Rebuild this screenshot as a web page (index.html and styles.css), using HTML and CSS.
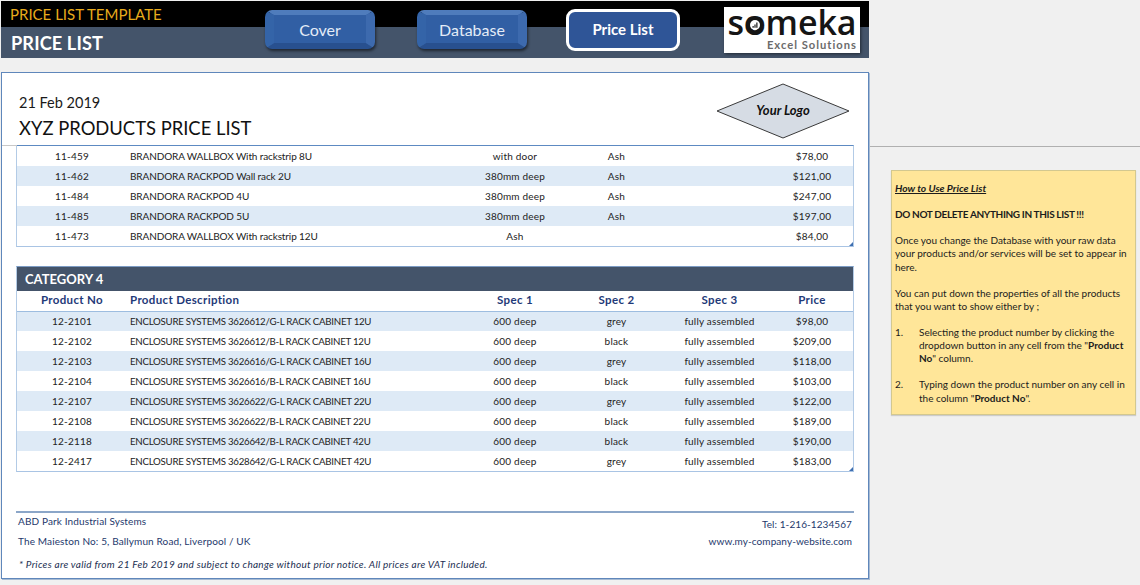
FILE: index.html
```html
<!DOCTYPE html>
<html lang="en">
<head>
<meta charset="utf-8">
<title>Price List</title>
<link rel="stylesheet" href="styles.css">
</head>
<body>
<div class="page">
  <main class="sheet">
    <header class="banner">
      <div class="banner-titles">
        <div class="banner-kicker">PRICE LIST TEMPLATE</div>
        <div class="banner-title">PRICE LIST</div>
      </div>
      <nav class="banner-nav">
        <a class="nav-btn">Cover</a>
        <a class="nav-btn nav-btn-db">Database</a>
        <a class="nav-btn nav-btn-active">Price List</a>
      </nav>
      <div class="logo">
        <div class="logo-word">s<span class="logo-o">o<svg class="logo-bars" viewBox="0 0 8 8"><circle cx="4" cy="4" r="4" fill="#fff"/><path d="M2 6.2h1V4.8H2zM3.5 6.2h1V3.6h-1zM5 6.2h1V2H5z" fill="#222"/></svg></span>meka</div>
        <div class="logo-sub">Excel Solutions</div>
      </div>
    </header>

    <section class="card">
      <div class="card-head">
        <div>
          <div class="card-date">21 Feb 2019</div>
          <h1 class="card-title">XYZ PRODUCTS PRICE LIST</h1>
        </div>
        <div class="your-logo">
          <svg class="your-logo-shape" viewBox="0 0 134 56"><polygon points="1,28 67,1 133,28 67,55" fill="#d6dce4" stroke="#3a3a3a" stroke-width="1"/></svg>
          <span class="your-logo-text">Your Logo</span>
        </div>
      </div>

      <div class="tbl tbl-cont">
        <table>
          <colgroup><col class="c1"><col class="c2"><col class="c3"><col class="c4"><col class="c5"><col class="c6"></colgroup>
          <tbody>
            <tr><td>11-459</td><td class="desc">BRANDORA WALLBOX With rackstrip 8U</td><td>with door</td><td>Ash</td><td></td><td>$78,00</td></tr>
            <tr><td>11-462</td><td class="desc">BRANDORA RACKPOD Wall rack 2U</td><td>380mm deep</td><td>Ash</td><td></td><td>$121,00</td></tr>
            <tr><td>11-484</td><td class="desc">BRANDORA RACKPOD 4U</td><td>380mm deep</td><td>Ash</td><td></td><td>$247,00</td></tr>
            <tr><td>11-485</td><td class="desc">BRANDORA RACKPOD 5U</td><td>380mm deep</td><td>Ash</td><td></td><td>$197,00</td></tr>
            <tr><td>11-473</td><td class="desc">BRANDORA WALLBOX With rackstrip 12U</td><td>Ash</td><td></td><td></td><td>$84,00</td></tr>
          </tbody>
        </table>
      </div>

      <div class="tbl tbl-cat">
        <div class="cat-bar">CATEGORY 4</div>
        <table>
          <colgroup><col class="c1"><col class="c2"><col class="c3"><col class="c4"><col class="c5"><col class="c6"></colgroup>
          <thead>
            <tr><th>Product No</th><th class="desc">Product Description</th><th>Spec 1</th><th>Spec 2</th><th>Spec 3</th><th>Price</th></tr>
          </thead>
          <tbody>
            <tr><td>12-2101</td><td class="desc">ENCLOSURE SYSTEMS 3626612/G-L RACK CABINET 12U</td><td>600 deep</td><td>grey</td><td>fully assembled</td><td>$98,00</td></tr>
            <tr><td>12-2102</td><td class="desc">ENCLOSURE SYSTEMS 3626612/B-L RACK CABINET 12U</td><td>600 deep</td><td>black</td><td>fully assembled</td><td>$209,00</td></tr>
            <tr><td>12-2103</td><td class="desc">ENCLOSURE SYSTEMS 3626616/G-L RACK CABINET 16U</td><td>600 deep</td><td>grey</td><td>fully assembled</td><td>$118,00</td></tr>
            <tr><td>12-2104</td><td class="desc">ENCLOSURE SYSTEMS 3626616/B-L RACK CABINET 16U</td><td>600 deep</td><td>black</td><td>fully assembled</td><td>$103,00</td></tr>
            <tr><td>12-2107</td><td class="desc">ENCLOSURE SYSTEMS 3626622/G-L RACK CABINET 22U</td><td>600 deep</td><td>grey</td><td>fully assembled</td><td>$122,00</td></tr>
            <tr><td>12-2108</td><td class="desc">ENCLOSURE SYSTEMS 3626622/B-L RACK CABINET 22U</td><td>600 deep</td><td>black</td><td>fully assembled</td><td>$189,00</td></tr>
            <tr><td>12-2118</td><td class="desc">ENCLOSURE SYSTEMS 3626642/B-L RACK CABINET 42U</td><td>600 deep</td><td>black</td><td>fully assembled</td><td>$190,00</td></tr>
            <tr><td>12-2417</td><td class="desc">ENCLOSURE SYSTEMS 3628642/G-L RACK CABINET 42U</td><td>600 deep</td><td>grey</td><td>fully assembled</td><td>$183,00</td></tr>
          </tbody>
        </table>
      </div>

      <footer class="card-foot">
        <div class="foot-row">
          <div class="foot-left">
            <div class="foot-l1">ABD Park Industrial Systems</div>
            <div class="foot-l2">The Maieston No: 5, Ballymun Road, Liverpool / UK</div>
          </div>
          <div class="foot-right">
            <div class="foot-r1">Tel: 1-216-1234567</div>
            <div class="foot-r2">www.my-company-website.com</div>
          </div>
        </div>
        <div class="foot-note">* Prices are valid from 21 Feb 2019 and subject to change without prior notice. All prices are VAT included.</div>
      </footer>
    </section>
  </main>

  <aside class="side">
    <div class="side-rule"></div>
    <div class="note">
      <p class="note-head">How to Use Price List</p>
      <p class="note-warn">DO NOT DELETE ANYTHING IN THIS LIST !!!</p>
      <p>Once you change the Database with your raw data<br>your products and/or services will be set to appear in<br>here.</p>
      <p>You can put down the properties of all the products<br>that you want to show either by ;</p>
      <ol class="note-list">
        <li><span>1.</span><div>Selecting the product number by clicking the<br>dropdown button in any cell from the "<b>Product<br>No</b>" column.</div></li>
        <li><span>2.</span><div>Typing down the product number on any cell in<br>the column "<b>Product No</b>".</div></li>
      </ol>
    </div>
  </aside>
</div>
</body>
</html>
```

FILE: styles.css
```css
* { box-sizing: border-box; }
html, body { margin: 0; height: 100%; }
body {
  background: #f0f0f0;
  font-family: "Lato", "Liberation Sans", sans-serif;
  color: #1a1a1a;
  overflow: hidden;
}
.page { display: flex; width: 1140px; height: 585px; }
.sheet { width: 870px; flex: none; }

/* banner */
.banner {
  margin: 1px 0 0 1px;
  width: 868px;
  height: 57px;
  display: flex;
  background: linear-gradient(#000 0 26px, #44546a 26px 100%);
}
.banner-titles { width: 264px; padding-left: 9px; }
.banner-kicker { color: #e8ab1c; font-size: 15px; line-height: 27px; height: 26px; }
.banner-title { color: #fff; font-size: 18.2px; font-weight: 700; line-height: 31px; padding: 1px 0 0 1px; letter-spacing: .1px; }
.banner-nav { display: flex; align-items: center; width: 459px; height: 57px; }
.nav-btn {
  width: 110px;
  height: 39px;
  border-style: solid;
  border-width: 5px 9px 6px;
  border-color: #4f7cbc #3d6aae #28508f #3464a8;
  border-radius: 7px;
  background: #315fa4;
  box-shadow: 1px 2px 3px rgba(0,0,0,.55);
  color: #e4ecf7;
  font-size: 16px;
  display: flex;
  align-items: center;
  justify-content: center;
  margin-right: 42px;
  white-space: nowrap;
}
.nav-btn-db { margin-right: 39px; }
.nav-btn-active {
  width: 114px;
  height: 42px;
  margin-right: 0;
  border: 3px solid #fff;
  border-radius: 9px;
  background: #2f5597;
  box-shadow: none;
  color: #fff;
  font-weight: 700;
  font-size: 15px;
  padding-bottom: 2px;
}
.logo {
  width: 136px;
  height: 46px;
  margin: 6px 0 0 0;
  background: #fff;
  color: #151515;
  box-shadow: 1px 1px 3px rgba(0,0,0,.5);
  padding: 0 3px;
  text-align: right;
}
.logo-word { font-size: 34px; line-height: 31px; font-weight: 600; letter-spacing: -.1px; height: 31px; text-align: center; white-space: nowrap; font-family: "Open Sans", sans-serif; }
.logo-o { position: relative; display: inline-block; font-weight: 800; }
.logo-bars { position: absolute; left: 50%; top: 13px; width: 10px; height: 10px; margin-left: -5px; }
.logo-sub { color: #6b6b6b; font-size: 11.2px; font-weight: 700; letter-spacing: 1px; line-height: 14px; }

/* card */
.card {
  margin: 14px 0 0 1px;
  width: 868px;
  height: 507px;
  background: #fff;
  border: 1px solid #5f87bb;
  box-shadow: 1px 1px 0 #a8bbd3;
  display: flex;
  flex-direction: column;
}
.card-head { height: 72px; padding: 10px 18px 0 17px; display: flex; justify-content: space-between; }
.card-date { font-size: 14.5px; line-height: 20px; margin-top: 10px; }
.card-title { font-size: 18.4px; font-weight: 400; line-height: 26px; margin: 2px 0 0; color: #111; white-space: nowrap; }
.your-logo { width: 134px; height: 56px; position: relative; display: flex; align-items: center; justify-content: center; }
.your-logo-shape { position: absolute; inset: 0; width: 100%; height: 100%; }
.your-logo-text { position: relative; font-size: 13px; font-weight: 700; font-style: italic; color: #111; margin-top: -2px; }

.tbl { margin: 0 14px; position: relative; border-left: 1px solid #b3cbe6; border-right: 1px solid #b3cbe6; border-bottom: 1px solid #a9c4e4; }
.tbl::after { content: ""; position: absolute; right: 0; bottom: 0; width: 0; height: 0; border-left: 4px solid transparent; border-bottom: 4px solid #3f6fb0; }
.tbl-cont { border-top: 1px solid #5d8ac2; }
.tbl-cont::before { content: ""; position: absolute; left: -15px; top: -1px; width: 15px; height: 1px; background: #c8c8c8; }
.tbl-cat { margin-top: 19px; border-top: 1px solid #7d9cc4; }
.cat-bar { background: #44546a; color: #fff; font-size: 13px; font-weight: 700; height: 24px; line-height: 25px; padding-left: 8px; }
table { width: 100%; border-collapse: collapse; table-layout: fixed; }
.c1 { width: 110px; }
.c2 { width: 333px; }
.c3 { width: 110px; }
.c4 { width: 93px; }
.c5 { width: 113px; }
.c6 { width: 77px; }
th, td { padding: 0; text-align: center; white-space: nowrap; height: 20px; font-weight: 400; }
td { font-size: 10px; color: #222; letter-spacing: .2px; }
th { font-size: 11.5px; font-weight: 700; color: #1f3a78; letter-spacing: .35px; height: 20px; padding-bottom: 2px; border-bottom: 1px solid #9dbde0; }
td:last-child, th:last-child { padding-right: 5px; }
td.desc, th.desc { text-align: left; padding-left: 3px; }
.tbl-cont td.desc { letter-spacing: -.12px; }
.tbl-cat td.desc { font-size: 9.7px; letter-spacing: -.26px; }
tbody tr:nth-child(even) td { background: #deeaf6; }
.tbl-cat tbody tr:nth-child(odd) td { background: #deeaf6; }
.tbl-cat tbody tr:nth-child(even) td { background: #fff; }

.card-foot { margin: 39px 14px 0; border-top: 2px solid #8ba6c8; color: #24386b; font-size: 10px; }
.foot-row { display: flex; justify-content: space-between; }
.foot-left { padding-left: 2px; }
.foot-l1 { line-height: 14px; margin-top: 1px; letter-spacing: .13px; }
.foot-l2 { line-height: 14px; margin-top: 6px; letter-spacing: .13px; }
.foot-right { text-align: right; padding-right: 2px; }
.foot-r1 { line-height: 14px; margin-top: 4px; letter-spacing: .08px; }
.foot-r2 { line-height: 14px; margin-top: 3px; letter-spacing: .08px; }
.foot-note { font-style: italic; margin: 9px 0 0 3px; line-height: 14px; color: #222f52; letter-spacing: .27px; white-space: nowrap; }

/* side */
.side { flex: 1; min-width: 0; }
.side-rule { margin-top: 146px; height: 1px; background: #b0b0b0; }
.note {
  margin: 23px 4px 0 21px;
  height: 245px;
  background: #ffe699;
  border: 1px solid #d3c88f;
  box-shadow: 0 1px 1px rgba(0,0,0,.15);
  padding: 11px 3px 0 3px;
  font-size: 10px;
  line-height: 13.1px;
  color: #1c1c1c;
  white-space: nowrap;
}
.note p { margin: 0 0 13.1px; }
.note-head { font-weight: 700; font-style: italic; text-decoration: underline; font-size: 10.3px; }
.note-warn { font-weight: 700; letter-spacing: -.36px; }
.note-list { list-style: none; margin: 0; padding: 0; }
.note-list li { display: flex; margin-bottom: 13.1px; }
.note-list span { width: 24px; flex: none; }
```
